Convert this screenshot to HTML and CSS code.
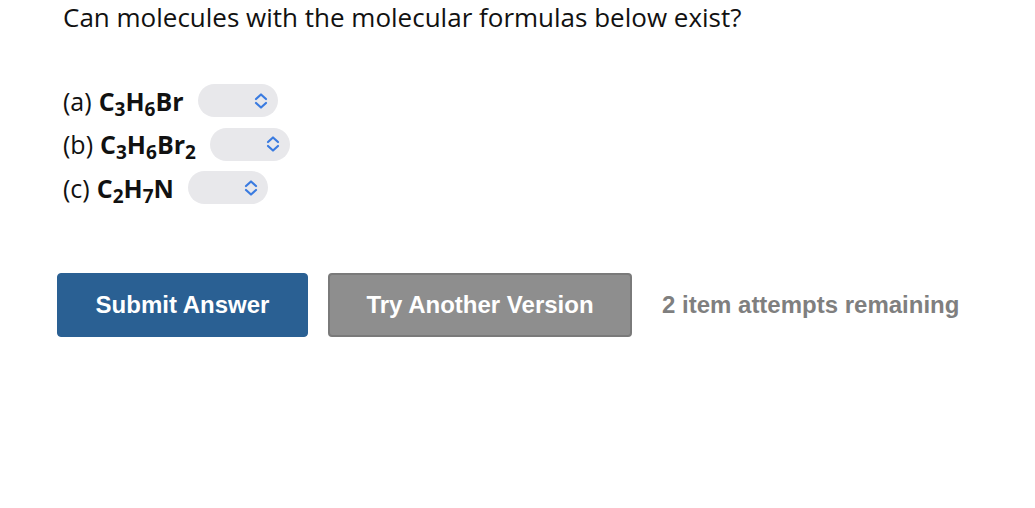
FILE: index.html
```html
<!DOCTYPE html>
<html lang="en">
<head>
    <meta charset="UTF-8">
    <title>Molecular Formulas</title>
    <link rel="stylesheet" href="styles.css">
</head>
<body>
    <div class="question">
        <p class="prompt">Can molecules with the molecular formulas below exist?</p>

        <div class="part">
            <span class="label">(a)</span>
            <span class="formula">C<sub>3</sub>H<sub>6</sub>Br</span>
            <div class="select"><svg viewBox="0 0 14 16" width="14" height="16"><path d="M2 6 L7 1.5 L12 6 M2 10 L7 14.5 L12 10" fill="none" stroke="#3a7be0" stroke-width="2.2" stroke-linecap="round" stroke-linejoin="round"/></svg></div>
        </div>
        <div class="part">
            <span class="label">(b)</span>
            <span class="formula">C<sub>3</sub>H<sub>6</sub>Br<sub>2</sub></span>
            <div class="select"><svg viewBox="0 0 14 16" width="14" height="16"><path d="M2 6 L7 1.5 L12 6 M2 10 L7 14.5 L12 10" fill="none" stroke="#3a7be0" stroke-width="2.2" stroke-linecap="round" stroke-linejoin="round"/></svg></div>
        </div>
        <div class="part">
            <span class="label">(c)</span>
            <span class="formula">C<sub>2</sub>H<sub>7</sub>N</span>
            <div class="select"><svg viewBox="0 0 14 16" width="14" height="16"><path d="M2 6 L7 1.5 L12 6 M2 10 L7 14.5 L12 10" fill="none" stroke="#3a7be0" stroke-width="2.2" stroke-linecap="round" stroke-linejoin="round"/></svg></div>
        </div>
    </div>

    <div class="actions">
        <button class="btn btn-submit">Submit Answer</button>
        <button class="btn btn-try">Try Another Version</button>
        <span class="attempts">2 item attempts remaining</span>
    </div>
</body>
</html>
```

FILE: styles.css
```css
body {
    margin: 0;
    padding: 0;
    background: #ffffff;
    font-family: 'Open Sans', 'Noto Sans', sans-serif;
    color: #111;
}

.question {
    padding-left: 63px;
}

.prompt {
    margin: 0;
    font-size: 26px;
    line-height: 35px;
    margin-bottom: 44px;
}

.part {
    display: flex;
    align-items: center;
    height: 43.5px;
    font-size: 25px;
}

.label {
    margin-right: 7px;
}

.formula {
    font-weight: 700;
    margin-right: 14px;
}

.formula sub {
    font-size: 19px;
    vertical-align: -5px;
    line-height: 0;
}

.select {
    width: 80px;
    height: 33px;
    border-radius: 17px;
    background: #e8e8eb;
    display: flex;
    align-items: center;
    justify-content: flex-end;
    padding-right: 10px;
    box-sizing: border-box;
}

.actions {
    display: flex;
    align-items: center;
    padding-left: 57px;
    margin-top: 63px;
}

.btn {
    height: 64px;
    border-radius: 4px;
    font-family: 'Liberation Sans', Arial, sans-serif;
    font-weight: 700;
    font-size: 24px;
    color: #fff;
    cursor: pointer;
}

.btn-submit {
    width: 251px;
    background: #2a6093;
    border: 1px solid #2a6093;
    margin-right: 20px;
}

.btn-try {
    width: 304px;
    background: #8e8e8e;
    border: 2px solid #7a7a7a;
    margin-right: 30px;
}

.attempts {
    font-family: 'Liberation Sans', Arial, sans-serif;
    font-weight: 700;
    font-size: 24px;
    color: #7f7f7f;
}
```
